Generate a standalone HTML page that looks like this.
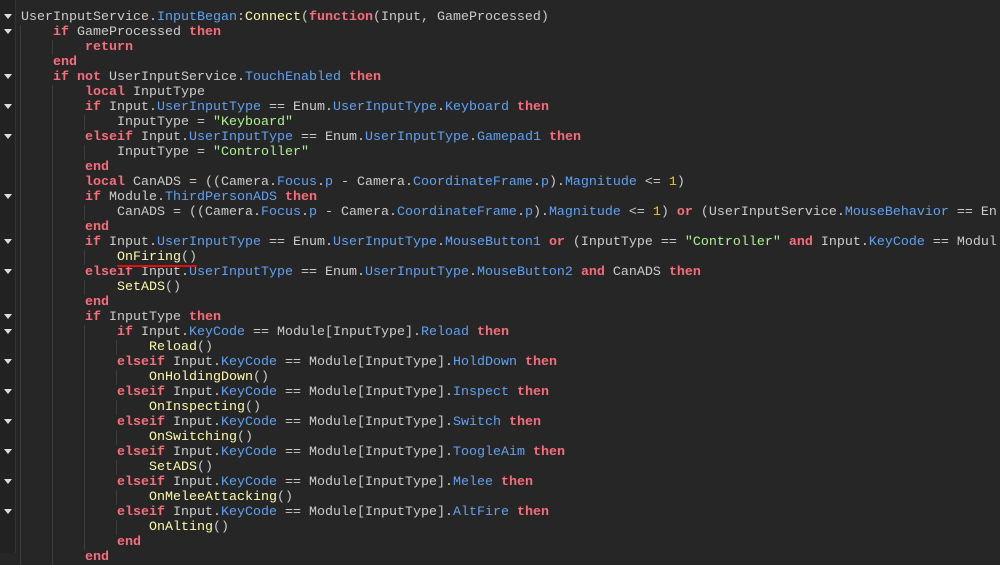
<!DOCTYPE html>
<html><head><meta charset="utf-8"><style>
html,body{margin:0;padding:0;width:1000px;height:553px;overflow:hidden;background:#262626;}
#g{position:absolute;left:0;top:0;width:15px;height:553px;background:#222;border-right:1px solid #333;}
.a{position:absolute;left:4px;width:0;height:0;border-left:4px solid transparent;border-right:4px solid transparent;border-top:5px solid #ddd;}
#c{position:absolute;left:21px;top:10px;font-family:"Liberation Mono",monospace;font-size:13.33px;color:#cccccc;}
.l{height:15px;line-height:15px;white-space:pre;}
.i{display:inline-block;width:32px;height:15px;vertical-align:top;box-shadow:inset 1px 0 0 #3d3d3d;margin-left:-1px;margin-right:1px}
.k{color:#f86d7c;font-weight:bold}
.p{color:#61a1f1}
.f{color:#fdfbac}
.s{color:#adf195}
.n{color:#ffc600}
#u{position:absolute;left:117px;top:265px;width:80px;height:2px;background:#e01010;border-radius:1px}
</style></head><body>
<div id="g">
<div class="a" style="top:14px"></div><div class="a" style="top:29px"></div><div class="a" style="top:74px"></div><div class="a" style="top:104px"></div><div class="a" style="top:134px"></div><div class="a" style="top:194px"></div><div class="a" style="top:239px"></div><div class="a" style="top:269px"></div><div class="a" style="top:314px"></div><div class="a" style="top:329px"></div><div class="a" style="top:359px"></div><div class="a" style="top:389px"></div><div class="a" style="top:419px"></div><div class="a" style="top:449px"></div><div class="a" style="top:479px"></div><div class="a" style="top:509px"></div>
</div>
<div id="c"><div class="l">UserInputService.<span class="p">InputBegan</span>:<span class="f">Connect</span>(<span class="k">function</span>(Input, GameProcessed)</div><div class="l"><span class="i"></span><span class="k">if</span> GameProcessed <span class="k">then</span></div><div class="l"><span class="i"></span><span class="i"></span><span class="k">return</span></div><div class="l"><span class="i"></span><span class="k">end</span></div><div class="l"><span class="i"></span><span class="k">if not</span> UserInputService.<span class="p">TouchEnabled</span> <span class="k">then</span></div><div class="l"><span class="i"></span><span class="i"></span><span class="k">local</span> InputType</div><div class="l"><span class="i"></span><span class="i"></span><span class="k">if</span> Input.<span class="p">UserInputType</span> == Enum.<span class="p">UserInputType</span>.<span class="p">Keyboard</span> <span class="k">then</span></div><div class="l"><span class="i"></span><span class="i"></span><span class="i"></span>InputType = <span class="s">"Keyboard"</span></div><div class="l"><span class="i"></span><span class="i"></span><span class="k">elseif</span> Input.<span class="p">UserInputType</span> == Enum.<span class="p">UserInputType</span>.<span class="p">Gamepad1</span> <span class="k">then</span></div><div class="l"><span class="i"></span><span class="i"></span><span class="i"></span>InputType = <span class="s">"Controller"</span></div><div class="l"><span class="i"></span><span class="i"></span><span class="k">end</span></div><div class="l"><span class="i"></span><span class="i"></span><span class="k">local</span> CanADS = ((Camera.<span class="p">Focus</span>.<span class="p">p</span> - Camera.<span class="p">CoordinateFrame</span>.<span class="p">p</span>).<span class="p">Magnitude</span> &lt;= <span class="n">1</span>)</div><div class="l"><span class="i"></span><span class="i"></span><span class="k">if</span> Module.<span class="p">ThirdPersonADS</span> <span class="k">then</span></div><div class="l"><span class="i"></span><span class="i"></span><span class="i"></span>CanADS = ((Camera.<span class="p">Focus</span>.<span class="p">p</span> - Camera.<span class="p">CoordinateFrame</span>.<span class="p">p</span>).<span class="p">Magnitude</span> &lt;= <span class="n">1</span>) <span class="k">or</span> (UserInputService.<span class="p">MouseBehavior</span> == En</div><div class="l"><span class="i"></span><span class="i"></span><span class="k">end</span></div><div class="l"><span class="i"></span><span class="i"></span><span class="k">if</span> Input.<span class="p">UserInputType</span> == Enum.<span class="p">UserInputType</span>.<span class="p">MouseButton1</span> <span class="k">or</span> (InputType == <span class="s">"Controller"</span> <span class="k">and</span> Input.<span class="p">KeyCode</span> == Modul</div><div class="l"><span class="i"></span><span class="i"></span><span class="i"></span><span class="f">OnFiring</span>()</div><div class="l"><span class="i"></span><span class="i"></span><span class="k">elseif</span> Input.<span class="p">UserInputType</span> == Enum.<span class="p">UserInputType</span>.<span class="p">MouseButton2</span> <span class="k">and</span> CanADS <span class="k">then</span></div><div class="l"><span class="i"></span><span class="i"></span><span class="i"></span><span class="f">SetADS</span>()</div><div class="l"><span class="i"></span><span class="i"></span><span class="k">end</span></div><div class="l"><span class="i"></span><span class="i"></span><span class="k">if</span> InputType <span class="k">then</span></div><div class="l"><span class="i"></span><span class="i"></span><span class="i"></span><span class="k">if</span> Input.<span class="p">KeyCode</span> == Module[InputType].<span class="p">Reload</span> <span class="k">then</span></div><div class="l"><span class="i"></span><span class="i"></span><span class="i"></span><span class="i"></span><span class="f">Reload</span>()</div><div class="l"><span class="i"></span><span class="i"></span><span class="i"></span><span class="k">elseif</span> Input.<span class="p">KeyCode</span> == Module[InputType].<span class="p">HoldDown</span> <span class="k">then</span></div><div class="l"><span class="i"></span><span class="i"></span><span class="i"></span><span class="i"></span><span class="f">OnHoldingDown</span>()</div><div class="l"><span class="i"></span><span class="i"></span><span class="i"></span><span class="k">elseif</span> Input.<span class="p">KeyCode</span> == Module[InputType].<span class="p">Inspect</span> <span class="k">then</span></div><div class="l"><span class="i"></span><span class="i"></span><span class="i"></span><span class="i"></span><span class="f">OnInspecting</span>()</div><div class="l"><span class="i"></span><span class="i"></span><span class="i"></span><span class="k">elseif</span> Input.<span class="p">KeyCode</span> == Module[InputType].<span class="p">Switch</span> <span class="k">then</span></div><div class="l"><span class="i"></span><span class="i"></span><span class="i"></span><span class="i"></span><span class="f">OnSwitching</span>()</div><div class="l"><span class="i"></span><span class="i"></span><span class="i"></span><span class="k">elseif</span> Input.<span class="p">KeyCode</span> == Module[InputType].<span class="p">ToogleAim</span> <span class="k">then</span></div><div class="l"><span class="i"></span><span class="i"></span><span class="i"></span><span class="i"></span><span class="f">SetADS</span>()</div><div class="l"><span class="i"></span><span class="i"></span><span class="i"></span><span class="k">elseif</span> Input.<span class="p">KeyCode</span> == Module[InputType].<span class="p">Melee</span> <span class="k">then</span></div><div class="l"><span class="i"></span><span class="i"></span><span class="i"></span><span class="i"></span><span class="f">OnMeleeAttacking</span>()</div><div class="l"><span class="i"></span><span class="i"></span><span class="i"></span><span class="k">elseif</span> Input.<span class="p">KeyCode</span> == Module[InputType].<span class="p">AltFire</span> <span class="k">then</span></div><div class="l"><span class="i"></span><span class="i"></span><span class="i"></span><span class="i"></span><span class="f">OnAlting</span>()</div><div class="l"><span class="i"></span><span class="i"></span><span class="i"></span><span class="k">end</span></div><div class="l"><span class="i"></span><span class="i"></span><span class="k">end</span></div></div>
<div id="u"></div>
</body></html>
